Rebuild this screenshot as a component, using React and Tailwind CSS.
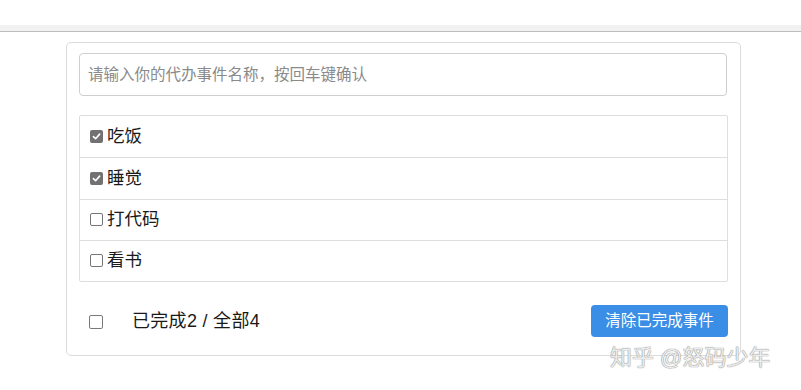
import React from "react";

const font = { fontFamily: '"Liberation Sans", "Noto Sans CJK SC", sans-serif' };

function Box({ checked }) {
  if (checked) {
    return (
      <span className="inline-flex h-[13px] w-[13px] shrink-0 items-center justify-center rounded-[2px] bg-[#727272]">
        <svg width="9" height="9" viewBox="0 0 10 10">
          <path d="M1.6 5.2 L4 7.5 L8.5 2.4" fill="none" stroke="#fff" strokeWidth="1.8" strokeLinecap="round" strokeLinejoin="round" />
        </svg>
      </span>
    );
  }
  return <span className="inline-block h-[13px] w-[13px] shrink-0 rounded-[2px] border border-[#767676] bg-white" />;
}

const items = [
  { t: "吃饭", c: true },
  { t: "睡觉", c: true },
  { t: "打代码", c: false },
  { t: "看书", c: false },
];

export default function App() {
  return (
    <div className="relative h-[390px] w-[801px] overflow-hidden bg-white text-[#222]" style={font}>
      <div className="mt-[25px] h-[7px] bg-[#f2f2f2] border-b border-[#bdbdbd]" />
      <div className="ml-[66px] mt-[10px] w-[675px] rounded-[5px] border border-[#dcdcdc] px-[12px] pt-[10px] pb-[18px]">
        <div className="mr-[1px] flex h-[43px] items-center rounded-[4px] border border-[#cfcfcf] px-[8px] text-[15.5px] text-[#8a8a8a]">
          请输入你的代办事件名称，按回车键确认
        </div>
        <div className="mt-[19px] rounded-[2px] border border-[#dedede]">
          {items.map((it, i) => (
            <div
              key={i}
              className={`flex h-[41.25px] items-center gap-[4px] pl-[10px] text-[17.5px] text-[#1a1a1a] ${i > 0 ? "border-t border-[#dedede]" : ""}`}
            >
              <Box checked={it.c} />
              <span className="leading-none">{it.t}</span>
            </div>
          ))}
        </div>
        <div className="mt-[23px] flex h-[32px] items-center">
          <span className="ml-[10px]">
            <span className="inline-block h-[14px] w-[14px] rounded-[2px] border border-[#7a7a7a] bg-white align-middle" />
          </span>
          <span className="ml-[29px] text-[18px] tracking-[0.3px] text-[#1a1a1a]">已完成2 / 全部4</span>
          <button className="ml-auto h-[32px] w-[137px] rounded-[4px] bg-[#3a8ee6] text-[15.5px] text-white" style={font}>
            清除已完成事件
          </button>
        </div>
      </div>
      <div className="absolute left-[610px] top-[341px] text-[22px] text-[#ececec] [text-shadow:0_0_1px_#8a8a8a,0_0_1px_#8a8a8a]">
        知乎 @怒码少年
      </div>
    </div>
  );
}
